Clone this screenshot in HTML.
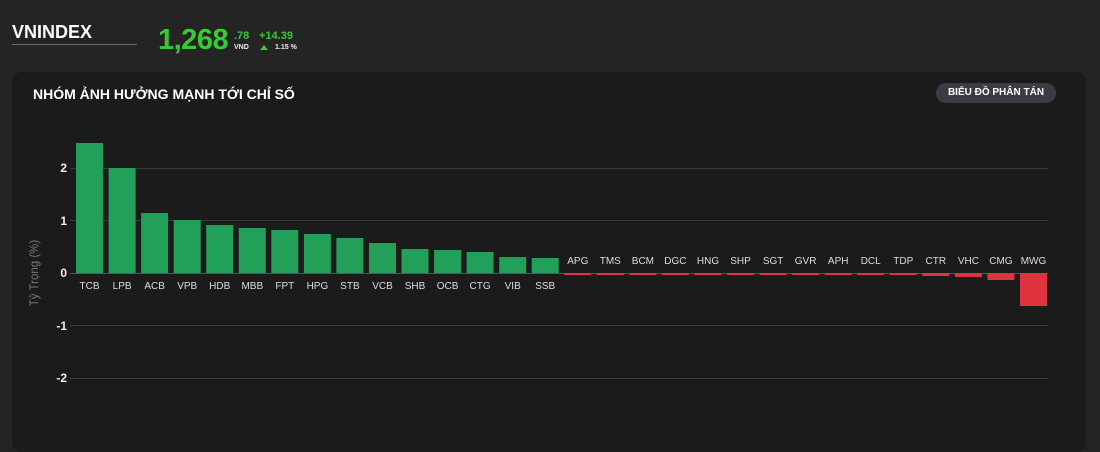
<!DOCTYPE html>
<html><head><meta charset="utf-8"><style>
html,body{margin:0;padding:0;background:#242424;width:1100px;height:433px;overflow:hidden;font-family:"Liberation Sans",Arial,sans-serif;}
.hdr{position:absolute;left:12px;top:22px;color:#fff;font-weight:bold;font-size:18px;letter-spacing:0px;}
.ul{position:absolute;left:12px;top:44px;width:125px;height:1px;background:#666;}
.big{position:absolute;left:158px;top:24px;color:#33cc33;font-weight:bold;font-size:29px;letter-spacing:-0.5px;}
.dec{position:absolute;left:234px;top:30px;color:#33cc33;font-weight:bold;font-size:11px;}
.vnd{position:absolute;left:234px;top:44px;color:#eee;font-size:7px;font-weight:bold;}
.chg{position:absolute;left:259px;top:30px;color:#33cc33;font-weight:bold;font-size:11px;}
.tri{position:absolute;left:260px;top:45px;width:0;height:0;border-left:4px solid transparent;border-right:4px solid transparent;border-bottom:5px solid #33cc33;}
.pct{position:absolute;left:275px;top:44px;color:#eee;font-size:7px;font-weight:bold;}
.card{position:absolute;left:12px;top:72px;width:1074px;height:380px;background:#1b1b1b;border-radius:10px;}
.title{position:absolute;left:33px;top:86px;color:#fff;font-weight:bold;font-size:14px;}
.btn{position:absolute;left:936px;top:83px;width:120px;height:20px;border-radius:10px;background:#3c3a44;color:#fff;font-weight:bold;font-size:10px;text-align:center;line-height:20px;}
svg{position:absolute;left:0;top:0;}
</style></head><body>
<div class="hdr">VNINDEX</div><div class="ul"></div>
<div class="big">1,268</div><div class="dec">.78</div><div class="vnd">VND</div>
<div class="chg">+14.39</div><div class="tri"></div><div class="pct">1.15 %</div>
<div class="card"></div>
<div class="title">NHÓM ẢNH HƯỞNG MẠNH TỚI CHỈ SỐ</div>
<div class="btn">BIỂU ĐỒ PHÂN TÁN</div>
<svg width="1100" height="433" font-family="Liberation Sans,Arial,sans-serif">
<g stroke="#3a3a3a" stroke-width="1">
<line x1="70" x2="1048" y1="168.5" y2="168.5"/>
<line x1="70" x2="1048" y1="220.5" y2="220.5"/>
<line x1="70" x2="1048" y1="325.5" y2="325.5"/>
<line x1="70" x2="1048" y1="378.5" y2="378.5"/>
<line x1="70" x2="1048" y1="273.5" y2="273.5" stroke="#555"/>
</g>
<g fill="#eee" font-size="12" font-weight="bold" text-anchor="end">
<text x="67" y="172">2</text><text x="67" y="225">1</text><text x="67" y="277">0</text>
<text x="67" y="330">-1</text><text x="67" y="382">-2</text>
</g>
<text transform="translate(38,273) rotate(-90)" fill="#777" font-size="11.5" text-anchor="middle">Tỷ Trọng (%)</text>
<g fill="#22a05a">
<rect x="76" y="143" width="27" height="130"/>
<rect x="108.6" y="168" width="27" height="105"/>
<rect x="141.1" y="213" width="27" height="60"/>
<rect x="173.7" y="220" width="27" height="53"/>
<rect x="206.2" y="225" width="27" height="48"/>
<rect x="238.8" y="228" width="27" height="45"/>
<rect x="271.3" y="230" width="27" height="43"/>
<rect x="303.9" y="234" width="27" height="39"/>
<rect x="336.4" y="238" width="27" height="35"/>
<rect x="369" y="243" width="27" height="30"/>
<rect x="401.5" y="249" width="27" height="24"/>
<rect x="434.1" y="250" width="27" height="23"/>
<rect x="466.6" y="252" width="27" height="21"/>
<rect x="499.2" y="257" width="27" height="16"/>
<rect x="531.7" y="258" width="27" height="15"/>
</g>
<g fill="#e03340">
<rect x="564.3" y="273" width="27" height="2"/>
<rect x="596.8" y="273" width="27" height="2"/>
<rect x="629.4" y="273" width="27" height="2"/>
<rect x="661.9" y="273" width="27" height="2"/>
<rect x="694.5" y="273" width="27" height="2"/>
<rect x="727" y="273" width="27" height="2"/>
<rect x="759.6" y="273" width="27" height="2"/>
<rect x="792.1" y="273" width="27" height="2"/>
<rect x="824.7" y="273" width="27" height="2"/>
<rect x="857.2" y="273" width="27" height="2"/>
<rect x="889.8" y="273" width="27" height="2"/>
<rect x="922.3" y="273" width="27" height="3"/>
<rect x="954.9" y="273" width="27" height="4"/>
<rect x="987.4" y="273" width="27" height="7"/>
<rect x="1020" y="273" width="27" height="33"/>
</g>
<g fill="#ddd" font-size="10" text-anchor="middle">
<text x="89.5" y="289">TCB</text><text x="122.1" y="289">LPB</text><text x="154.6" y="289">ACB</text>
<text x="187.2" y="289">VPB</text><text x="219.7" y="289">HDB</text><text x="252.3" y="289">MBB</text>
<text x="284.8" y="289">FPT</text><text x="317.4" y="289">HPG</text><text x="349.9" y="289">STB</text>
<text x="382.5" y="289">VCB</text><text x="415" y="289">SHB</text><text x="447.6" y="289">OCB</text>
<text x="480.1" y="289">CTG</text><text x="512.7" y="289">VIB</text><text x="545.2" y="289">SSB</text>
<text x="577.8" y="264">APG</text><text x="610.3" y="264">TMS</text><text x="642.9" y="264">BCM</text>
<text x="675.4" y="264">DGC</text><text x="708" y="264">HNG</text><text x="740.5" y="264">SHP</text>
<text x="773.1" y="264">SGT</text><text x="805.6" y="264">GVR</text><text x="838.2" y="264">APH</text>
<text x="870.7" y="264">DCL</text><text x="903.3" y="264">TDP</text><text x="935.8" y="264">CTR</text>
<text x="968.4" y="264">VHC</text><text x="1000.9" y="264">CMG</text><text x="1033.5" y="264">MWG</text>
</g>
</svg>
</body></html>
